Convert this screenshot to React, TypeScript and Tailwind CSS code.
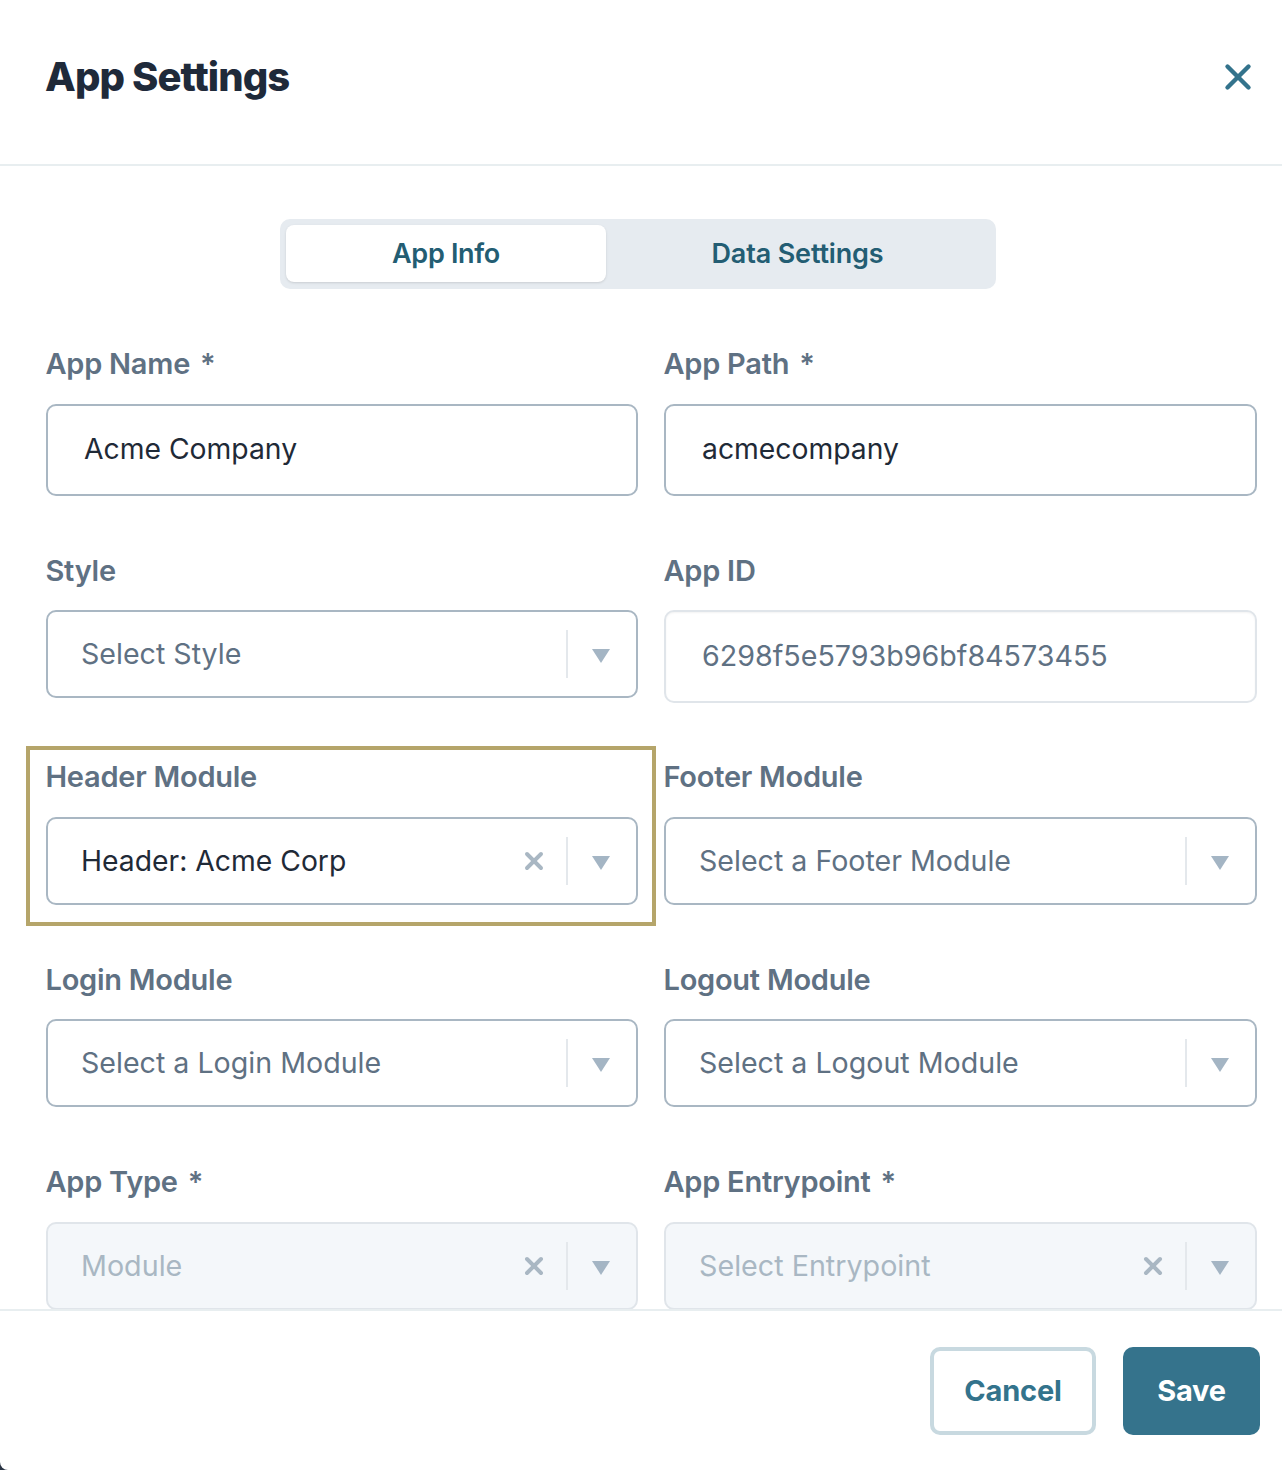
import { X } from 'lucide-react';

const font = 'font-["Inter","Liberation_Sans",sans-serif]';

function Label({ text, required, tight }: { text: string; required?: boolean; tight?: boolean }) {
  return (
    <label
      className={`-ml-[0.5px] flex h-[30px] items-center text-[29px] font-semibold tracking-[-0.25px] text-[#5f7183] ${
        tight ? 'mb-[24px]' : 'mb-[25px]'
      }`}
    >
      {text}
      {required && <span className="ml-[10px]">*</span>}
    </label>
  );
}

function TextField({ value, readOnly }: { value: string; readOnly?: boolean }) {
  return (
    <div
      className={
        readOnly
          ? '-mb-px flex h-[93px] items-center rounded-[10px] border-2 border-[#e0e5ea] pb-[1px] pl-[36px] text-[28.65px] text-[#5f7183] shadow-[inset_0_1px_2px_rgba(0,0,0,0.05)]'
          : 'flex h-[92px] items-center rounded-[10px] border-2 border-[#a9b7c3] pb-[2px] pl-[36px] text-[28.3px] text-[#1f2a37]'
      }
    >
      {value}
    </div>
  );
}

function Select({
  value,
  placeholder,
  clearable,
  disabled,
}: {
  value: string;
  placeholder?: boolean;
  clearable?: boolean;
  disabled?: boolean;
}) {
  let box = 'border-[#a9b7c3] bg-white';
  let text = placeholder ? 'text-[28.6px] text-[#5f7183]' : 'text-[28.3px] text-[#1f2a37]';
  if (disabled) {
    box = 'border-[#e0e5ea] bg-[#f4f7fa]';
    text = 'text-[28.7px] text-[#a9b7c3]';
  }
  return (
    <div className={`flex h-[88px] items-center rounded-[10px] border-2 pl-[33px] ${box}`}>
      <span className={`flex-1 ${text}`}>{value}</span>
      {clearable && <X size={28} strokeWidth={3.4} className="mr-[18px] text-[#a9b7c3]" />}
      <span className="h-12 w-[2px] bg-[#e4e8ec]" />
      <svg viewBox="0 0 18 14" className="ml-[24px] mr-[26px] mt-[3px] h-[14px] w-[18px] text-[#a4b5c4]">
        <path d="M0 0H18L9 14Z" fill="currentColor" />
      </svg>
    </div>
  );
}

export default function App() {
  return (
    <div className={`${font} h-[1470px] w-[1282px] bg-[#2a3443]`}>
      <div className="relative flex h-full flex-col overflow-hidden rounded-bl-[8px] bg-white">
        <header className="flex h-[166px] shrink-0 items-center justify-between border-b-2 border-[#e8eef0] pb-[10px] pl-[45px] pr-[23px]">
          <h1 className="text-[40px] font-extrabold tracking-[-0.9px] text-[#1f2a3a]">App Settings</h1>
          <X size={42} strokeWidth={2.5} className="text-[#33738c]" />
        </header>

        <div className="min-h-0 flex-1 overflow-hidden pl-[46px] pr-[25px]">
          <div className="mt-[53px] flex justify-center pr-[27px]">
            <div className="flex h-[70px] w-[716px] rounded-[10px] bg-[#e6ebf0] p-[6px]">
              <div className="flex h-[57px] w-[320px] items-center justify-center rounded-[8px] bg-white pt-[2px] text-[27px] font-semibold tracking-[-0.3px] text-[#235d73] shadow-sm">
                App Info
              </div>
              <div className="flex h-[57px] flex-1 items-center justify-center pr-[1px] pt-[2px] text-[27px] font-semibold tracking-[-0.15px] text-[#235d73]">
                Data Settings
              </div>
            </div>
          </div>

          <div className="mt-[60px] grid grid-cols-[592px_593px] gap-x-[26px] gap-y-[60px]">
            <div>
              <Label text="App Name" required />
              <TextField value="Acme Company" />
            </div>
            <div>
              <Label text="App Path" required />
              <TextField value="acmecompany" />
            </div>
            <div>
              <Label text="Style" tight />
              <Select value="Select Style" placeholder />
            </div>
            <div>
              <Label text="App ID" tight />
              <TextField value="6298f5e5793b96bf84573455" readOnly />
            </div>
            <div>
              <Label text="Header Module" />
              <Select value="Header: Acme Corp" clearable />
            </div>
            <div>
              <Label text="Footer Module" />
              <Select value="Select a Footer Module" placeholder />
            </div>
            <div>
              <Label text="Login Module" tight />
              <Select value="Select a Login Module" placeholder />
            </div>
            <div>
              <Label text="Logout Module" tight />
              <Select value="Select a Logout Module" placeholder />
            </div>
            <div>
              <Label text="App Type" required />
              <Select value="Module" clearable disabled />
            </div>
            <div>
              <Label text="App Entrypoint" required />
              <Select value="Select Entrypoint" clearable disabled />
            </div>
          </div>
        </div>

        <footer className="flex h-[161px] shrink-0 justify-end gap-[27px] border-t-2 border-[#e8eef0] pr-[22px] pt-[36px]">
          <button className="h-[88px] w-[166px] rounded-[10px] border-4 border-[#c8d9e0] bg-white text-[29px] font-bold tracking-[-0.2px] text-[#33738c]">
            Cancel
          </button>
          <button className="h-[88px] w-[137px] rounded-[10px] bg-[#35738c] text-[29px] font-bold tracking-[-0.2px] text-white">
            Save
          </button>
        </footer>

        {/* gold highlight around the header module field */}
        <div className="absolute left-[26px] top-[746px] h-[180px] w-[630px] border-4 border-[#b5a56a]" />
      </div>
    </div>
  );
}
